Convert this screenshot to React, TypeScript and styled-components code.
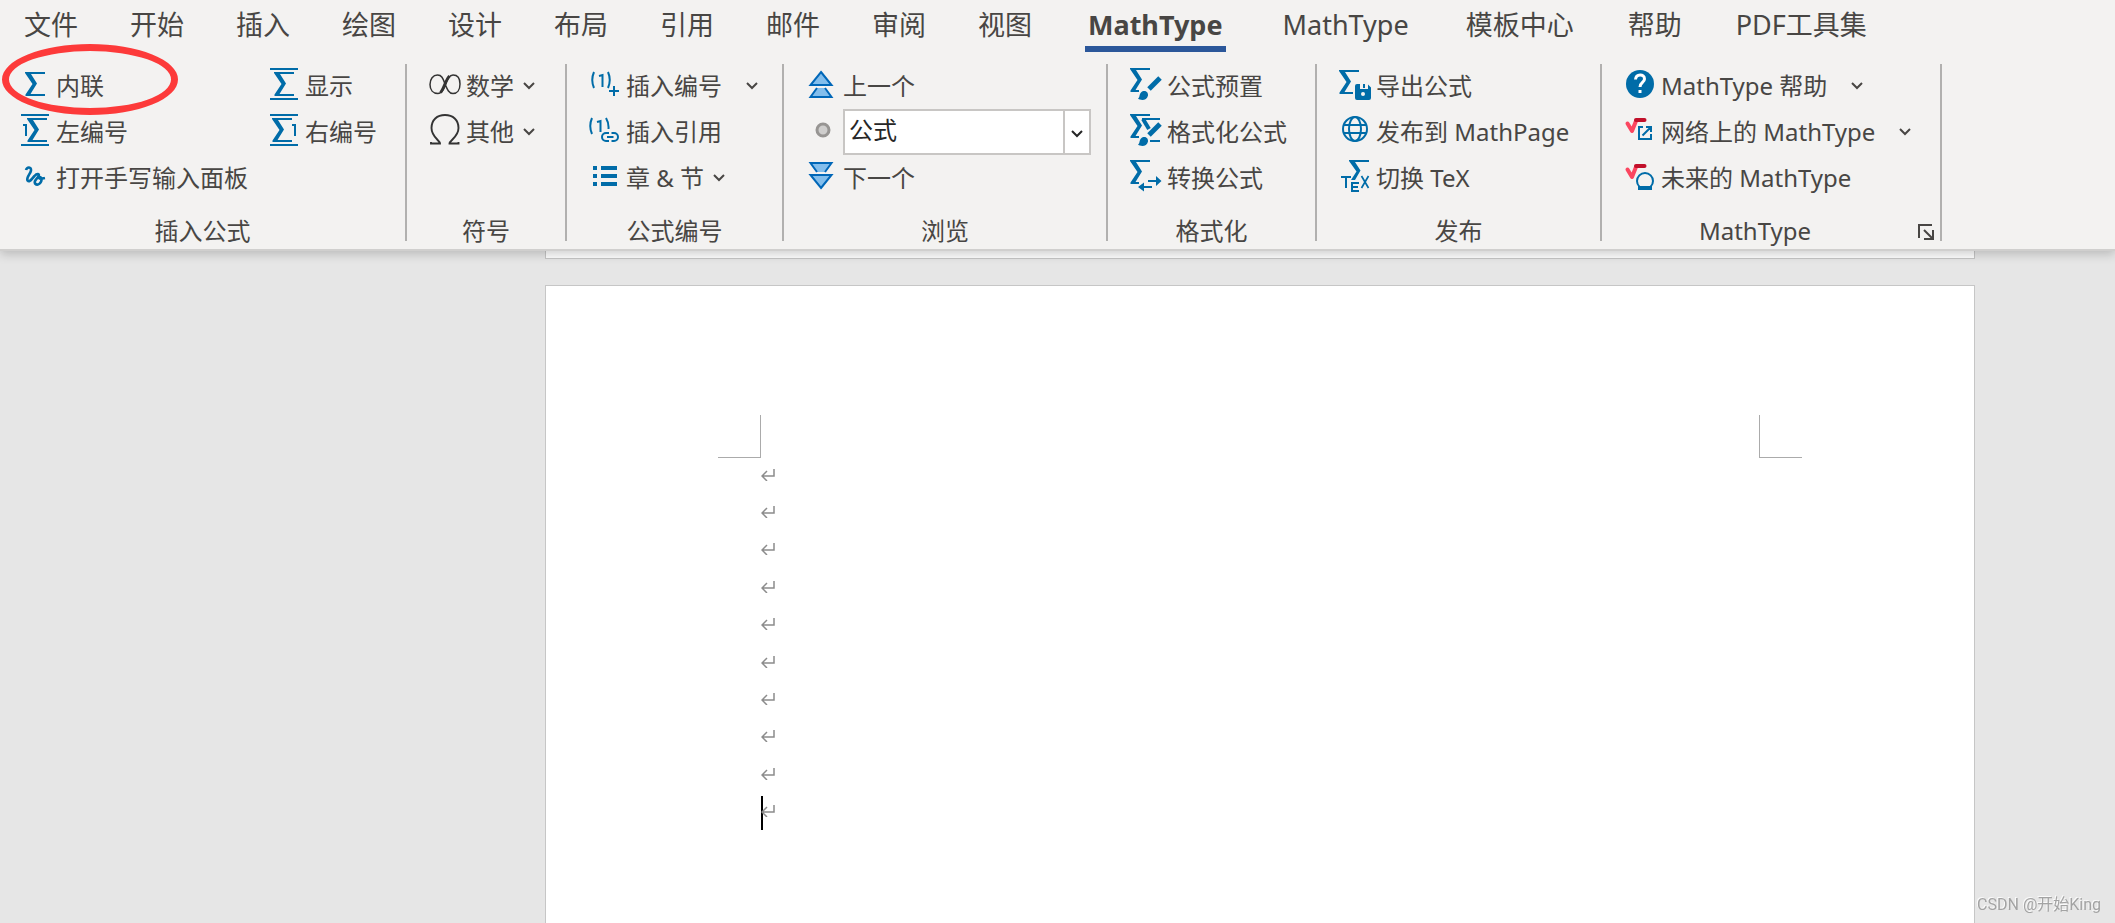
import React from "react";
import styled, { createGlobalStyle } from "styled-components";

const BLUE = "#006ca8";
const INK = "#484644";

const GlobalStyle = createGlobalStyle`
  *, *::before, *::after { box-sizing: border-box; }
  body {
    margin: 0;
    background: #e6e6e6;
    color: ${INK};
    font-family: "Noto Sans", "Noto Sans CJK SC", sans-serif;
    font-size: 24px;
    line-height: 36px;
  }
  button, select { font: inherit; color: inherit; }
`;

const AppFrame = styled.div`
  display: flex;
  flex-direction: column;
  min-height: 100vh;
`;

/* ---------- Ribbon ---------- */

const RibbonShell = styled.header`
  position: relative;
  z-index: 1;
  background: #f3f2f1;
  border-bottom: 2px solid #d0cfce;
  box-shadow: 0 3px 10px rgba(0, 0, 0, 0.2);
`;

const TabBar = styled.nav`
  display: flex;
  gap: 53px;
  height: 52px;
  padding-left: 24px;
`;

const TabSet = styled.div<{ $gap: number }>`
  display: flex;
  flex: none;
  gap: ${(p) => p.$gap}px;
`;

const Tab = styled.button<{ $active?: boolean; $latin?: boolean }>`
  flex: none;
  height: 52px;
  padding: 4px ${(p) => (p.$latin ? 3 : 0)}px 0;
  border: 0;
  border-bottom: 6px solid ${(p) => (p.$active ? "#2b579a" : "transparent")};
  background: none;
  font-size: 27px;
  font-weight: ${(p) => (p.$active ? 700 : 400)};
  line-height: 40px;
  white-space: nowrap;
`;

const Groups = styled.div`
  display: flex;
  padding: 12px 0 8px;
`;

const Group = styled.section<{ $width: number; $inset?: number }>`
  display: flex;
  flex: none;
  flex-direction: column;
  justify-content: space-between;
  width: ${(p) => p.$width}px;
  height: 177px;
  padding-left: ${(p) => p.$inset ?? 22}px;
  border-right: 2px solid #b1b0af;
`;

const Commands = styled.div`
  display: flex;
  gap: 20px;
  margin-top: -1px;
`;

const Column = styled.div`
  display: flex;
  flex-direction: column;
  align-items: flex-start;
`;

const CommandButton = styled.button`
  display: flex;
  align-items: center;
  height: 46px;
  padding: 0;
  border: 0;
  background: none;
  white-space: nowrap;
`;

const CommandIcon = styled.svg`
  flex: none;
  width: 32px;
  height: 36px;
  margin-right: 5px;
`;

const Chevron = styled.svg<{ $wide?: boolean }>`
  flex: none;
  width: 12px;
  height: 8px;
  margin-left: ${(p) => (p.$wide ? 24 : 9)}px;
`;

const GroupFooter = styled.div<{ $inset?: number }>`
  display: flex;
  align-items: center;
  height: 24px;
  margin-left: -${(p) => p.$inset ?? 22}px;
`;

const GroupLabel = styled.h2`
  flex: 1;
  margin: 0;
  padding-top: 4px;
  font-size: 24px;
  font-weight: 400;
  line-height: 24px;
  text-align: center;
`;

const LauncherButton = styled.button`
  width: 16px;
  height: 16px;
  margin: 6px 6px 0 10px;
  padding: 0;
  border: 0;
  background: none;
  line-height: 0;
`;

const MarkedCommand = styled.div`
  position: relative;
`;

const RedCircle = styled.span`
  position: absolute;
  top: -19px;
  left: -17px;
  width: 176px;
  height: 71px;
  border: 7px solid #fd3a3a;
  border-radius: 50%;
  pointer-events: none;
`;

const BrowseRow = styled.div`
  display: flex;
  align-items: center;
  height: 46px;
`;

const SelectBox = styled.div`
  position: relative;
  width: 248px;
  height: 46px;
`;

const BrowseSelect = styled.select`
  appearance: none;
  width: 100%;
  height: 100%;
  padding: 0 34px 4px 4px;
  border: 2px solid #c8c6c4;
  border-radius: 0;
  background: #fff;
  color: #262626;
`;

const SelectArrow = styled.span`
  position: absolute;
  top: 2px;
  right: 2px;
  bottom: 2px;
  display: flex;
  align-items: center;
  justify-content: center;
  width: 26px;
  border-left: 2px solid #c8c6c4;
  color: #262626;
  pointer-events: none;

  svg { margin: 4px 0 0; }
`;

/* ---------- Document ---------- */

const Workspace = styled.main`
  display: flex;
  flex: 1;
  flex-direction: column;
  align-items: center;
  padding-left: 405px;
`;

const PreviousPage = styled.div`
  width: 100%;
  max-width: 1430px;
  height: 8px;
  border: 1px solid #c6c6c6;
  border-top: 0;
  background: #fff;
`;

const Page = styled.article`
  flex: 1;
  width: 100%;
  max-width: 1430px;
  margin-top: 26px;
  padding-top: 129px;
  border: 1px solid #c6c6c6;
  border-bottom: 0;
  background: #fff;
`;

const CornerRow = styled.div`
  display: flex;
  justify-content: space-between;
  margin-bottom: -2px;
  padding: 0 172px;
`;

const Corner = styled.span<{ $side: "left" | "right" }>`
  width: 43px;
  height: 43px;
  border-bottom: 1px solid #ababab;
  ${(p) => (p.$side === "left" ? "border-right" : "border-left")}: 1px solid #ababab;
`;

const Paragraphs = styled.div`
  display: grid;
  grid-auto-rows: 1fr;
  height: 374px;
  padding: 0 215px;
`;

const Paragraph = styled.p`
  display: flex;
  align-items: center;
  margin: 0;
`;

const Caret = styled.span`
  align-self: flex-end;
  width: 2px;
  height: 34px;
  margin-right: -2px;
  background: #000;
`;

const Watermark = styled.span`
  position: fixed;
  right: 14px;
  bottom: 7px;
  z-index: 2;
  color: #a3a3a3;
  font-family: Roboto, "Noto Sans CJK SC", sans-serif;
  font-size: 16px;
  line-height: 22px;
  text-shadow: -1px -1px 0 #fafafa;
`;

/* ---------- Icons ---------- */

const Icon = ({ children }: { children: React.ReactNode }) => (
  <CommandIcon viewBox="0 0 32 36" fill="none" aria-hidden="true">
    {children}
  </CommandIcon>
);

const Sigma = ({ x = 0, y = 0, foot = 20 }: { x?: number; y?: number; foot?: number }) => (
  <path
    transform={`translate(${x} ${y})`}
    fill={BLUE}
    d={`M0 0H20V2H6L12 11.5L5.500 22H${foot}V24H0.500V22.500L7.500 12L0 1Z`}
  />
);

const Rules = () => <path d="M2 1H30M2 31H30" stroke={BLUE} strokeWidth="2" />;

const InlineIcon = () => <Icon><Sigma x={6} y={4} /></Icon>;
const DisplayIcon = () => <Icon><Rules /><Sigma x={6} y={4} /></Icon>;
const LeftNumberIcon = () => (
  <Icon><Rules /><Sigma x={8} y={4} /><path d="M4 11H7V22" stroke={BLUE} strokeWidth="2" /></Icon>
);
const RightNumberIcon = () => (
  <Icon><Rules /><Sigma x={4} y={4} /><path d="M24 11H27V22" stroke={BLUE} strokeWidth="2" /></Icon>
);
const HandwritingIcon = () => (
  <Icon>
    <path
      d="M7 10C8 6.500 12.500 6.500 12 10.500C11.500 14 7 17 8.500 20.500C10.500 23 12.500 19 15.500 16C18 13 21 13.500 19.500 16.500C18 19 14.500 20.500 16 23.500C19 26.500 23 22.500 22.500 18.500C21.500 16 19 16.500 20 18C21 19.500 23.500 18.500 26 18"
      stroke={BLUE} strokeWidth="2.600"
    />
  </Icon>
);
const InfinityIcon = () => (
  <Icon>
    <path
      d="M16 18C14 23 12 25.500 9 25.500C4 25.500 1 22 1 16.500C1 11 4 7 8.500 7C13 7 14 10.500 16 16C18.500 22 20 25.500 24 25.500C28 25.500 31 22 31 16C31 10 28 7 24 7C20 7 18 11 16 18Z"
      stroke="#333" strokeWidth="1.500"
    />
    <path d="M11.500 24.500C15 21 16.500 12 20.500 8" stroke="#333" strokeWidth="3" />
  </Icon>
);
const OmegaIcon = () => (
  <Icon>
    <path
      d="M2 28V29.500H11C11 26.500 2.500 23 2.500 14C2.500 6 8 1 16 1S29.500 6 29.500 14C29.500 23 20.500 26.500 20.500 29.500H29.500V28"
      stroke="#333" strokeWidth="1.900"
    />
  </Icon>
);
const InsertNumberIcon = () => (
  <Icon>
    <path
      d="M5 4Q1.500 12 5 20M10 8L13.500 7V19M19 4Q22.500 12 19 20M25 18V28M20 23H30"
      stroke={BLUE} strokeWidth="2"
    />
  </Icon>
);
const InsertReferenceIcon = () => (
  <Icon>
    <path
      d="M3 4Q-0.500 12 3 20M8 8L11.500 7V18M17 4Q20 9 19.500 15"
      stroke={BLUE} strokeWidth="2"
    />
    <path
      d="M20 19H17A4 4 0 0 0 17 27H20M22.500 19H25A4 4 0 0 1 25 27H22.500M18 23H24.500"
      stroke={BLUE} strokeWidth="2"
    />
  </Icon>
);
const ListIcon = () => (
  <Icon>
    <path d="M4 8H8M12 8H28M4 16H8M12 16H28M4 24H8M12 24H28" stroke={BLUE} strokeWidth="4" />
  </Icon>
);
const PreviousIcon = () => (
  <Icon>
    <g fill="#83beec" stroke="#0067b8" strokeWidth="2">
      <path d="M15 4L25.500 17H4.500Z" />
      <path d="M11 20L4.500 29H25.500L19 20" />
    </g>
  </Icon>
);
const NextIcon = () => (
  <Icon>
    <g fill="#83beec" stroke="#0067b8" strokeWidth="2">
      <path d="M11 12L4.500 3H25.500L19 12" />
      <path d="M15 28L25.500 15H4.500Z" />
    </g>
  </Icon>
);
const DotIcon = () => (
  <Icon><circle cx="17" cy="16" r="6" fill="#cfcecd" stroke="#979593" strokeWidth="3" /></Icon>
);
const Brush = () => (
  <>
    <path d="M30 10L19 21" stroke={BLUE} strokeWidth="5" />
    <path d="M11 24.500C14 21.500 18.500 23.500 18 27.500C17 32.500 11 33 8 30.500C10 29.500 9 26.500 11 24.500Z" fill={BLUE} />
  </>
);
const PresetIcon = () => <Icon><Sigma foot={9} /><Brush /></Icon>;
const FormatIcon = () => (
  <Icon>
    <Sigma foot={9} />
    <path d="M12 5H30M20 27H30" stroke={BLUE} strokeWidth="2" />
    <path d="M13 5L19 15" stroke={BLUE} strokeWidth="4" />
    <Brush />
  </Icon>
);
const ConvertIcon = () => (
  <Icon>
    <Sigma foot={9} />
    <path d="M18 21H27M22 27H12" stroke={BLUE} strokeWidth="2" />
    <path d="M26 16L31.500 21L26 26ZM14 22.500L8 27L14 31.500Z" fill={BLUE} />
  </Icon>
);
const ExportIcon = () => (
  <Icon>
    <Sigma y={2} foot={14} />
    <path d="M18 16H21V21H29V16.500L32 19.500V30Q32 32 30 32H18Q16 32 16 30V18Q16 16 18 16Z" fill={BLUE} />
    <path d="M24 16H26V20H24Z" fill={BLUE} />
    <circle cx="24" cy="26" r="2" fill="#f3f2f1" />
  </Icon>
);
const GlobeIcon = () => (
  <Icon>
    <g stroke={BLUE} strokeWidth="2">
      <circle cx="16" cy="15" r="12" />
      <ellipse cx="16" cy="15" rx="6" ry="12" />
      <path d="M5 11H27M5 19H27" />
    </g>
  </Icon>
);
const TexIcon = () => (
  <Icon>
    <path d="M10 0H30V2H16L21.500 10.500L16 20H12L17.500 11.500L10 1Z" fill={BLUE} />
    <g stroke={BLUE} strokeWidth="2">
      <path d="M2 17H12M7 17V28" />
      <path d="M20 23H13V31H20M13 27H19" />
      <path d="M22.500 16L29.500 28M29.500 16L22.500 28" strokeWidth="1.700" />
    </g>
  </Icon>
);
const HelpIcon = () => (
  <Icon>
    <circle cx="16" cy="16" r="14" fill={BLUE} />
    <path d="M11.500 11.500C12 5.500 20.500 5.500 20.500 11C20.500 14.500 16 14.500 16 19" stroke="#fff" strokeWidth="3" />
    <path d="M14.500 22H17.500V25H14.500Z" fill="#fff" />
  </Icon>
);
const RedCheck = () => (
  <>
    <path d="M3.500 9.500L8 17L12 7" stroke="#fb4660" strokeWidth="4" strokeLinejoin="round" strokeLinecap="round" />
    <path d="M12 6H20.500" stroke="#c1102a" strokeWidth="4" strokeLinecap="round" />
  </>
);
const WebIcon = () => (
  <Icon>
    <RedCheck />
    <path d="M19 13H15V25H27V20M22 13H27V18M18.500 21.500L26.500 13.500" stroke={BLUE} strokeWidth="2" />
  </Icon>
);
const FutureIcon = () => (
  <Icon>
    <RedCheck />
    <circle cx="21" cy="21" r="8" fill="#f3f2f1" stroke={BLUE} strokeWidth="2" />
    <path d="M14 26H28V30H14Z" fill={BLUE} />
  </Icon>
);

const ChevronDown = ({ wide }: { wide?: boolean }) => (
  <Chevron $wide={wide} viewBox="0 0 12 8" fill="none" aria-hidden="true">
    <path d="M1 1L6 6L11 1" stroke="currentColor" strokeWidth="2" />
  </Chevron>
);

const LauncherIcon = () => (
  <svg width="16" height="16" viewBox="0 0 16 16" fill="none" stroke={INK} strokeWidth="2" aria-hidden="true">
    <path d="M1 14V1H14M6 6L14 14M6 15H15V6" />
  </svg>
);

const ReturnMark = () => (
  <svg width="14" height="12" viewBox="0 0 14 12" fill="none" stroke="#8c8c8c" strokeWidth="1.500" aria-hidden="true">
    <path d="M13 0V7H1M6 2L1 7L6 12" />
  </svg>
);

/* ---------- Composition ---------- */

type TabItem = { name: string; active?: boolean; latin?: boolean };

const builtInTabs: TabItem[] = [
  "文件", "开始", "插入", "绘图", "设计", "布局", "引用", "邮件", "审阅", "视图",
].map((name) => ({ name }));

const addInTabs: TabItem[] = [
  { name: "MathType", active: true, latin: true },
  { name: "MathType", latin: true },
  { name: "模板中心" },
  { name: "帮助" },
  { name: "PDF工具集" },
];

const paragraphCount = 10;

const Tabs = ({ items, gap }: { items: TabItem[]; gap: number }) => (
  <TabSet $gap={gap}>
    {items.map((tab, i) => (
      <Tab key={i} type="button" $active={tab.active} $latin={tab.latin}>{tab.name}</Tab>
    ))}
  </TabSet>
);

type CommandProps = {
  icon: React.ReactNode;
  label: string;
  menu?: "near" | "far";
};

const Command = ({ icon, label, menu }: CommandProps) => (
  <CommandButton type="button">
    {icon}
    {label}
    {menu && <ChevronDown wide={menu === "far"} />}
  </CommandButton>
);

type RibbonGroupProps = {
  label: string;
  width: number;
  inset?: number;
  launcher?: boolean;
  children: React.ReactNode;
};

const RibbonGroup = ({ label, width, inset, launcher, children }: RibbonGroupProps) => (
  <Group $width={width} $inset={inset} aria-label={label}>
    <Commands>{children}</Commands>
    <GroupFooter $inset={inset}>
      <GroupLabel>{label}</GroupLabel>
      {launcher && (
        <LauncherButton type="button" aria-label="MathType 选项">
          <LauncherIcon />
        </LauncherButton>
      )}
    </GroupFooter>
  </Group>
);

export default function App() {
  return (
    <AppFrame>
      <GlobalStyle />
      <RibbonShell>
        <TabBar>
          <Tabs items={builtInTabs} gap={52} />
          <Tabs items={addInTabs} gap={54} />
        </TabBar>
        <Groups>
          <RibbonGroup label="插入公式" width={407} inset={19}>
            <Column>
              <MarkedCommand>
                <Command icon={<InlineIcon />} label="内联" />
                <RedCircle />
              </MarkedCommand>
              <Command icon={<LeftNumberIcon />} label="左编号" />
              <Command icon={<HandwritingIcon />} label="打开手写输入面板" />
            </Column>
            <Column>
              <Command icon={<DisplayIcon />} label="显示" />
              <Command icon={<RightNumberIcon />} label="右编号" />
            </Column>
          </RibbonGroup>
          <RibbonGroup label="符号" width={160}>
            <Column>
              <Command icon={<InfinityIcon />} label="数学" menu="near" />
              <Command icon={<OmegaIcon />} label="其他" menu="near" />
            </Column>
          </RibbonGroup>
          <RibbonGroup label="公式编号" width={217}>
            <Column>
              <Command icon={<InsertNumberIcon />} label="插入编号" menu="far" />
              <Command icon={<InsertReferenceIcon />} label="插入引用" />
              <Command icon={<ListIcon />} label="章 & 节" menu="near" />
            </Column>
          </RibbonGroup>
          <RibbonGroup label="浏览" width={324}>
            <Column>
              <Command icon={<PreviousIcon />} label="上一个" />
              <BrowseRow>
                <DotIcon />
                <SelectBox>
                  <BrowseSelect aria-label="浏览对象" defaultValue="公式">
                    <option>公式</option>
                  </BrowseSelect>
                  <SelectArrow><ChevronDown /></SelectArrow>
                </SelectBox>
              </BrowseRow>
              <Command icon={<NextIcon />} label="下一个" />
            </Column>
          </RibbonGroup>
          <RibbonGroup label="格式化" width={209}>
            <Column>
              <Command icon={<PresetIcon />} label="公式预置" />
              <Command icon={<FormatIcon />} label="格式化公式" />
              <Command icon={<ConvertIcon />} label="转换公式" />
            </Column>
          </RibbonGroup>
          <RibbonGroup label="发布" width={285}>
            <Column>
              <Command icon={<ExportIcon />} label="导出公式" />
              <Command icon={<GlobeIcon />} label="发布到 MathPage" />
              <Command icon={<TexIcon />} label="切换 TeX" />
            </Column>
          </RibbonGroup>
          <RibbonGroup label="MathType" width={340} launcher>
            <Column>
              <Command icon={<HelpIcon />} label="MathType 帮助" menu="far" />
              <Command icon={<WebIcon />} label="网络上的 MathType" menu="far" />
              <Command icon={<FutureIcon />} label="未来的 MathType" />
            </Column>
          </RibbonGroup>
        </Groups>
      </RibbonShell>
      <Workspace>
        <PreviousPage />
        <Page>
          <CornerRow>
            <Corner $side="left" />
            <Corner $side="right" />
          </CornerRow>
          <Paragraphs>
            {Array.from({ length: paragraphCount }, (_, i) => (
              <Paragraph key={i}>
                {i === paragraphCount - 1 && <Caret />}
                <ReturnMark />
              </Paragraph>
            ))}
          </Paragraphs>
        </Page>
      </Workspace>
      <Watermark>CSDN @开始King</Watermark>
    </AppFrame>
  );
}
